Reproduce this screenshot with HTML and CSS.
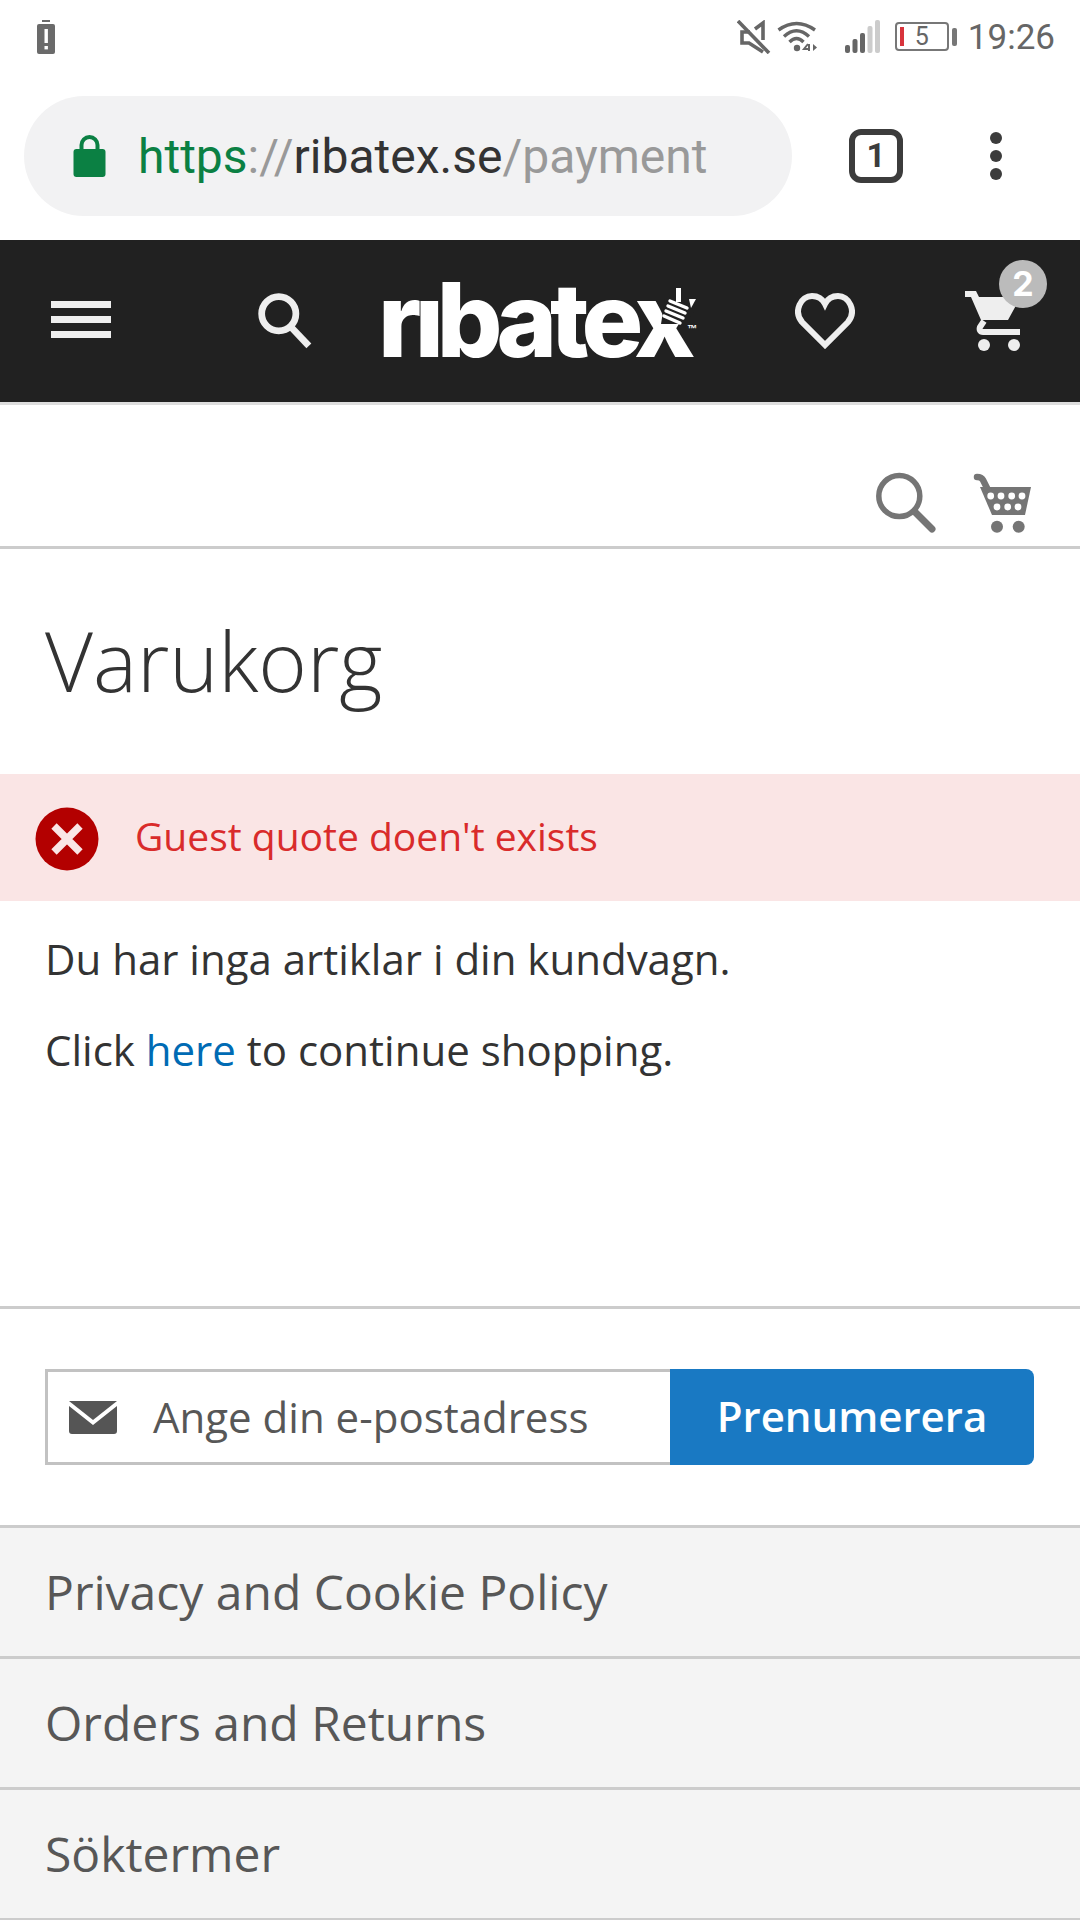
FILE: index.html
```html
<!DOCTYPE html>
<html lang="en">
<head>
    <meta charset="UTF-8">
    <meta name="viewport" content="width=device-width, initial-scale=1.0">
    <title>Varukorg</title>
    <link rel="stylesheet" href="styles.css">
</head>
<body>

<!-- status bar -->
<div class="status">
    <svg class="st-alert" width="20" height="34" viewBox="0 0 20 34">
        <rect x="6" y="0" width="8" height="2" fill="#6a6a6a"/>
        <rect x="1" y="4" width="18" height="30" rx="2" fill="#6a6a6a"/>
        <rect x="8.5" y="9" width="3.4" height="14" fill="#fff"/>
        <rect x="8.5" y="26" width="3.4" height="3.4" fill="#fff"/>
    </svg>
    <div class="status-right">
        <svg class="st-mute" width="34" height="34" viewBox="0 0 34 34" fill="none" stroke="#666" stroke-width="3.6">
            <path d="M13 12H5v11h7l14 9"/>
            <path d="M26 20V3l-8 6"/>
            <path d="M1 1l31 32"/>
        </svg>
        <svg class="st-wifi" width="42" height="34" viewBox="0 0 42 34" fill="none" stroke="#666" stroke-width="3.4">
            <path d="M1.500 10Q19.500-3 38 10"/>
            <path d="M7 16.500Q19.500 5 32 16.500"/>
            <path d="M12.500 22Q19.500 15 26.500 22"/>
            <circle cx="20" cy="28" r="3.200" fill="#666" stroke="none"/>
            <path d="M31 24l-4 5h6M32 24v7" stroke-width="2"/>
            <path d="M36 24l4 3.500-4 3.500z" fill="#666" stroke="none"/>
        </svg>
        <svg class="st-signal" width="36" height="34" viewBox="0 0 36 34">
            <rect x="0" y="25" width="5" height="8" rx="2" fill="#666"/>
            <rect x="7.500" y="19" width="5" height="14" rx="2" fill="#666"/>
            <rect x="15" y="13" width="5" height="20" rx="2" fill="#666"/>
            <rect x="22.500" y="6" width="5" height="27" rx="2" fill="#ccc"/>
            <rect x="30" y="0" width="5" height="33" rx="2" fill="#ccc"/>
        </svg>
        <div class="st-batt">
            <span class="st-level"></span>
            <span class="st-num">5</span>
        </div>
        <span class="st-cap"></span>
        <span class="st-time">19:26</span>
    </div>
</div>

<!-- browser toolbar -->
<div class="toolbar">
    <div class="omnibox">
        <svg class="lock" width="33" height="43" viewBox="0 0 33 43">
            <path d="M8.500 18v-7a8 8 0 0 1 16 0v7" fill="none" stroke="#0b8043" stroke-width="4"/>
            <rect x="0.500" y="15" width="32" height="28" rx="3" fill="#0b8043"/>
        </svg>
        <span class="url"><span class="u-green">https</span><span class="u-grey">://</span><span class="u-dark">ribatex.se</span><span class="u-grey">/payment</span></span>
    </div>
    <div class="tabs">1</div>
    <div class="dots"><i></i><i></i><i></i></div>
</div>

<!-- site header -->
<div class="header">
    <div class="burger"><i></i><i></i><i></i></div>
    <svg class="h-search" width="54" height="56" viewBox="0 0 52 54" fill="none" stroke="#eee" stroke-width="6.500">
        <circle cx="20" cy="20" r="16.500"/>
        <path d="M32 33l17 18"/>
    </svg>
    <div class="logo">
        <span class="logo-word">rıbatex</span>
        <svg class="knot" width="40" height="50" viewBox="0 0 40 50">
            <path d="M6 14H40V20L26 39H2z" fill="#212121"/>
            <path d="M17 3h5v14h-5z" fill="#fff"/>
            <path d="M30 14h7l-5 9z" fill="#fff"/>
            <path d="M11 16L28 23M9 21L26 28M7 26L24 33M5 31L21 38" stroke="#fff" stroke-width="3.400" stroke-linecap="round"/>
        </svg>
        <span class="tm">™</span>
    </div>
    <svg class="h-heart" width="60" height="56" viewBox="0 0 60 56" fill="none" stroke="#eee" stroke-width="6">
        <path d="M30 52L7 29C-2 18 6 3 17 3c6 0 10 2 13 8c3-6 7-8 13-8c11 0 19 15 10 26z"/>
    </svg>
    <div class="h-cart">
        <svg width="56" height="60" viewBox="0 0 56 60">
            <path d="M0 0h11l3 6h42l-2 3-11 20H16L6 6H0z" fill="#eee"/>
            <path d="M19 30l-4 6c-1 3 0 5 3 5h37" fill="none" stroke="#eee" stroke-width="6"/>
            <circle cx="19" cy="54" r="6" fill="#eee"/>
            <circle cx="49" cy="54" r="6" fill="#eee"/>
        </svg>
        <span class="badge">2</span>
    </div>
</div>

<!-- search and cart row -->
<div class="subbar">
    <svg class="s-search" width="62" height="62" viewBox="0 0 62 62" fill="none" stroke="#757575" stroke-width="5.500">
        <circle cx="24.300" cy="24" r="20.500"/>
        <path d="M40 40l17 17" stroke-width="7" stroke-linecap="round"/>
    </svg>
    <svg class="s-cart" width="60" height="60" viewBox="0 0 60 60">
        <path d="M8 14H59L53 42H20z" fill="#757575"/>
        <path d="M5 4c3 0 5 1 6 3l6 12" fill="none" stroke="#757575" stroke-width="6.500" stroke-linecap="round"/>
        <g fill="#fff">
            <circle cx="18.700" cy="23" r="3.400"/><circle cx="29" cy="23" r="3.400"/><circle cx="39.700" cy="23" r="3.400"/><circle cx="50" cy="23" r="3.400"/>
            <circle cx="25" cy="34" r="3.400"/><circle cx="35.700" cy="34" r="3.400"/><circle cx="46" cy="34" r="3.400"/>
        </g>
        <circle cx="25" cy="53.700" r="6" fill="#757575"/>
        <circle cx="46.700" cy="53.700" r="6" fill="#757575"/>
    </svg>
</div>

<h1 class="title">Varukorg</h1>

<div class="alert">
    <svg class="alert-icon" width="64" height="64" viewBox="0 0 64 64">
        <circle cx="32" cy="32" r="31.500" fill="#b30000"/>
        <path d="M19 19l26 26M45 19L19 45" stroke="#fae5e5" stroke-width="7.500"/>
    </svg>
    <span class="alert-text">Guest quote doen't exists</span>
</div>

<div class="content">
    <p>Du har inga artiklar i din kundvagn.</p>
    <p>Click <a href="#">here</a> to continue shopping.</p>
</div>

<div class="newsletter">
    <div class="field">
        <svg class="mail" width="50" height="34" viewBox="0 0 50 34">
            <path d="M1 1h48L25 20z" fill="#555"/>
            <path d="M1 6l24 19L49 6v25a3 3 0 0 1-3 3H4a3 3 0 0 1-3-3z" fill="#555"/>
        </svg>
        <span class="field-text">Ange din e-postadress</span>
    </div>
    <div class="subscribe">Prenumerera</div>
</div>

<ul class="links">
    <li>Privacy and Cookie Policy</li>
    <li>Orders and Returns</li>
    <li>Söktermer</li>
</ul>

</body>
</html>
```

FILE: styles.css
```css
html,
body {
    margin: 0;
    background: #fff;
}

body {
    width: 1080px;
    height: 1920px;
    overflow: hidden;
    font-family: 'Open Sans', sans-serif;
    color: #333;
}

/* status bar */
.status {
    height: 96px;
    display: flex;
    align-items: flex-start;
    justify-content: space-between;
    padding: 20px 25px 0 36px;
    box-sizing: border-box;
}
.status-right {
    display: flex;
    align-items: flex-start;
}
.st-wifi { margin-left: 6px; }
.st-signal { margin-left: 26px; }
.st-batt {
    width: 54px;
    height: 29px;
    margin: 2px 0 0 14px;
    border: 2px solid #777;
    border-radius: 4px;
    box-sizing: border-box;
    display: flex;
    align-items: center;
}
.st-level {
    width: 4px;
    height: 19px;
    margin-left: 3px;
    background: #d8343c;
}
.st-num {
    font: 25px 'Roboto', sans-serif;
    color: #666;
    margin-left: 11px;
}
.st-cap {
    width: 5px;
    height: 18px;
    margin: 8px 0 0 3px;
    background: #777;
    border-radius: 2px;
}
.st-time {
    font: 35px/34px 'Roboto', sans-serif;
    color: #666;
    margin: 1px 0 0 11px;
}

/* toolbar */
.toolbar {
    height: 144px;
    display: flex;
    align-items: flex-start;
}
.omnibox {
    width: 768px;
    height: 120px;
    margin-left: 24px;
    background: #f2f2f3;
    border-radius: 60px;
    display: flex;
    align-items: center;
    box-sizing: border-box;
    padding-left: 49px;
}
.lock { margin-top: -2px; }
.url {
    font: 48px 'Roboto', sans-serif;
    margin-left: 32px;
    white-space: nowrap;
}
.u-green { color: #0b8043; }
.u-grey { color: #999; }
.u-dark { color: #333; }
.tabs {
    width: 54px;
    height: 54px;
    margin: 33px 0 0 57px;
    border: 6px solid #3c3c3c;
    border-radius: 12px;
    box-sizing: border-box;
    font: 700 33px/42px 'Roboto', sans-serif;
    text-align: center;
    color: #3c3c3c;
}
.dots {
    margin: 36px 0 0 87px;
    display: flex;
    flex-direction: column;
    gap: 6px;
}
.dots i {
    display: block;
    width: 12px;
    height: 12px;
    border-radius: 50%;
    background: #3c3c3c;
}

/* header */
.header {
    height: 162px;
    background: #212121;
    border-bottom: 3px solid #ddd;
    display: flex;
    align-items: flex-start;
}
.burger {
    width: 60px;
    margin: 61px 0 0 51px;
    display: flex;
    flex-direction: column;
    gap: 8px;
}
.burger i {
    display: block;
    height: 7px;
    background: #eee;
}
.h-search { margin: 53px 0 0 147px; }
.logo {
    width: 313px;
    height: 100px;
    margin: 30px 0 0 66px;
    position: relative;
}
.logo-word {
    font: 800 103px/100px 'Inter', sans-serif;
    letter-spacing: -7px;
    color: #fff;
    white-space: nowrap;
}
.knot {
    position: absolute;
    left: 281px;
    top: 15px;
}
.tm {
    position: absolute;
    left: 309px;
    top: 53px;
    font: 700 10px/12px 'Liberation Sans', sans-serif;
    color: #fff;
}
.h-heart { margin: 53px 0 0 104px; }
.h-cart {
    margin: 51px 0 0 110px;
    position: relative;
}
.badge {
    position: absolute;
    left: 34px;
    top: -31px;
    width: 48px;
    height: 48px;
    border-radius: 50%;
    background: #bbb;
    color: #fff;
    font: 700 34px/48px 'Inter', sans-serif;
    text-align: center;
}

/* search and cart */
.subbar {
    height: 73px;
    border-bottom: 3px solid #ccc;
    display: flex;
    justify-content: flex-end;
    align-items: flex-start;
    padding: 68px 48px 0 0;
}
.s-search { margin-top: -1px; }
.s-cart { margin-left: 35px; }

.title {
    margin: 58px 0 0 45px;
    font-weight: 300;
    font-size: 83px;
    line-height: 106px;
    color: #333;
}

/* error */
.alert {
    height: 127px;
    margin-top: 61px;
    background: #fae5e5;
    display: flex;
    align-items: center;
    padding-left: 35px;
    font-size: 39px;
    color: #d92b2b;
}
.alert-icon {
    margin: 2px 36px 0 0;
}
.alert-text { margin-top: -4px; }

.content {
    padding: 29px 45px 0;
    height: 376px;
    border-bottom: 3px solid #ccc;
    font-size: 42px;
    line-height: 58px;
}
.content p { margin: 0 0 33px; }
.content a {
    color: #006bb4;
    text-decoration: none;
}

/* newsletter */
.newsletter {
    display: flex;
    margin: 60px 46px 0 45px;
    height: 96px;
}
.field {
    width: 625px;
    border: 3px solid #c2c2c2;
    border-right: 0;
    box-sizing: border-box;
    display: flex;
    align-items: center;
    padding-left: 20px;
    font-size: 42px;
    color: #575757;
}
.field-text { margin-top: -2px; }
.mail { margin-right: 35px; }
.subscribe {
    width: 364px;
    background: #1979c3;
    border-radius: 0 8px 8px 0;
    color: #fff;
    font-size: 42px;
    font-weight: 600;
    line-height: 94px;
    text-align: center;
}

/* footer links */
.links {
    list-style: none;
    margin: 60px 0 0;
    padding: 0;
    border-top: 3px solid #ccc;
}
.links li {
    height: 128px;
    line-height: 128px;
    padding-left: 45px;
    background: #f4f4f4;
    border-bottom: 3px solid #ccc;
    font-size: 48px;
    color: #575757;
}
```
